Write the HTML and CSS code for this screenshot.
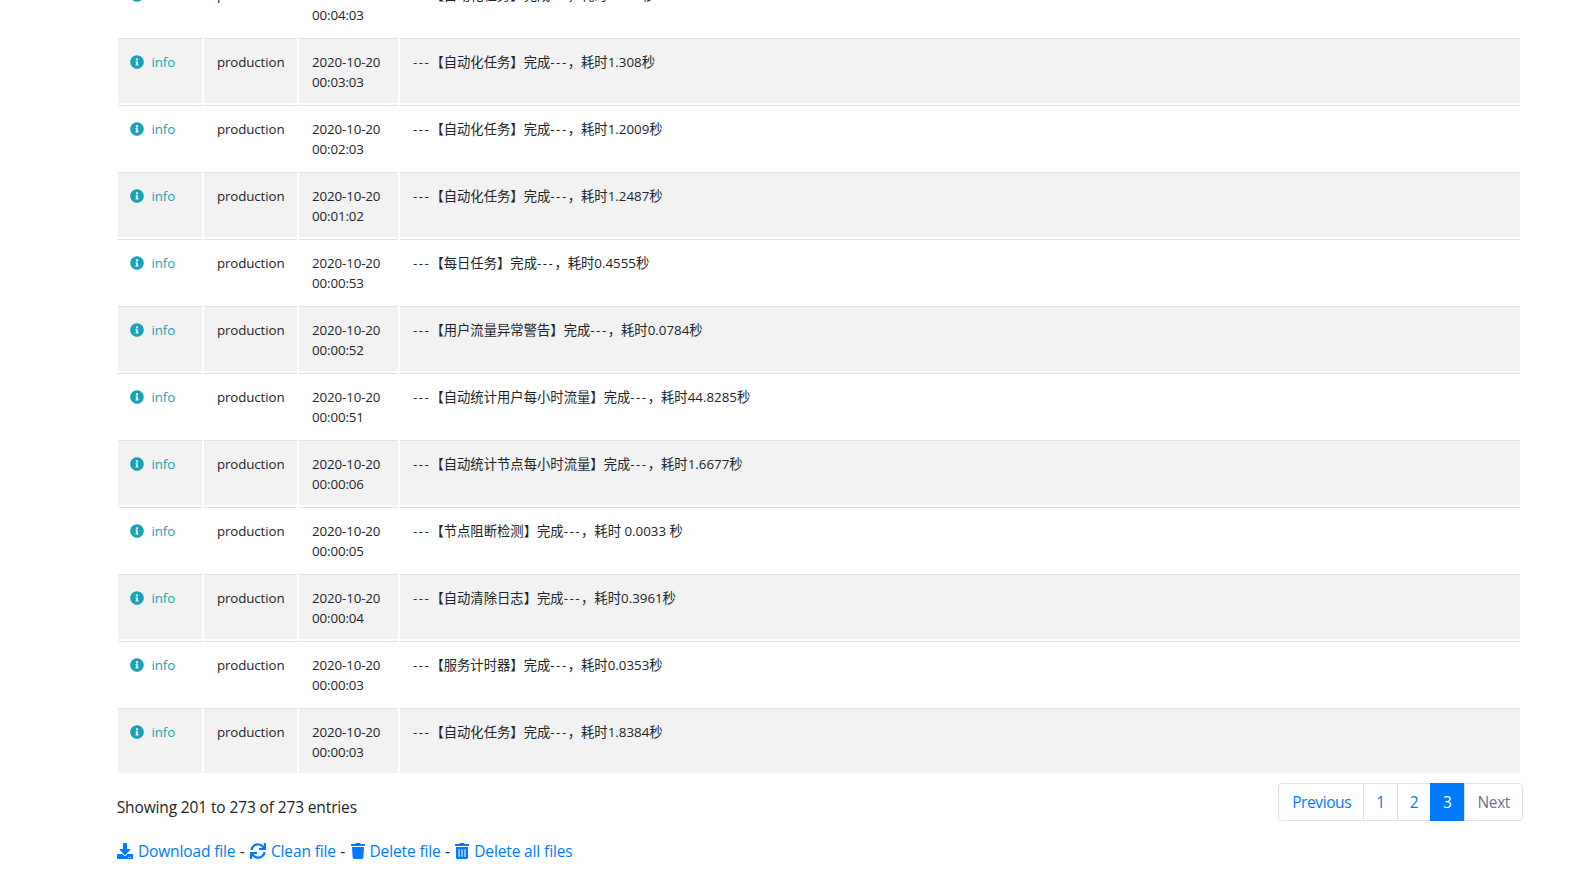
FILE: index.html
```html
<!DOCTYPE html>
<html lang="en">
<head>
<meta charset="utf-8">
<title>Log viewer</title>
<link rel="stylesheet" href="styles.css">
</head>
<body>
<svg class="defs" aria-hidden="true"><defs>
<symbol id="i-info" viewBox="0 0 512 512"><path d="M256 8C119.043 8 8 119.083 8 256c0 136.997 111.043 248 248 248s248-111.003 248-248C504 119.083 392.957 8 256 8zm0 110c23.196 0 42 18.804 42 42s-18.804 42-42 42-42-18.804-42-42 18.804-42 42-42zm56 254c0 6.627-5.373 12-12 12h-88c-6.627 0-12-5.373-12-12v-24c0-6.627 5.373-12 12-12h12v-64h-12c-6.627 0-12-5.373-12-12v-24c0-6.627 5.373-12 12-12h64c6.627 0 12 5.373 12 12v100h12c6.627 0 12 5.373 12 12v24z"/></symbol>
</defs></svg>
<main class="content">
<table class="logs">
<colgroup><col class="c-level"><col class="c-ctx"><col class="c-date"><col></colgroup>
<tbody>
<tr><td class="lvl"><span class="level"><svg class="ico-info"><use href="#i-info"/></svg>info</span></td><td>production</td><td>2020-10-20<br>00:04:03</td><td class="msg"><span class="dash">---</span>【自动化任务】完成<span class="dash">---</span>，耗时1.536秒</td></tr>
<tr><td class="lvl"><span class="level"><svg class="ico-info"><use href="#i-info"/></svg>info</span></td><td>production</td><td>2020-10-20<br>00:03:03</td><td class="msg"><span class="dash">---</span>【自动化任务】完成<span class="dash">---</span>，耗时1.308秒</td></tr>
<tr><td class="lvl"><span class="level"><svg class="ico-info"><use href="#i-info"/></svg>info</span></td><td>production</td><td>2020-10-20<br>00:02:03</td><td class="msg"><span class="dash">---</span>【自动化任务】完成<span class="dash">---</span>，耗时1.2009秒</td></tr>
<tr><td class="lvl"><span class="level"><svg class="ico-info"><use href="#i-info"/></svg>info</span></td><td>production</td><td>2020-10-20<br>00:01:02</td><td class="msg"><span class="dash">---</span>【自动化任务】完成<span class="dash">---</span>，耗时1.2487秒</td></tr>
<tr><td class="lvl"><span class="level"><svg class="ico-info"><use href="#i-info"/></svg>info</span></td><td>production</td><td>2020-10-20<br>00:00:53</td><td class="msg"><span class="dash">---</span>【每日任务】完成<span class="dash">---</span>，耗时0.4555秒</td></tr>
<tr><td class="lvl"><span class="level"><svg class="ico-info"><use href="#i-info"/></svg>info</span></td><td>production</td><td>2020-10-20<br>00:00:52</td><td class="msg"><span class="dash">---</span>【用户流量异常警告】完成<span class="dash">---</span>，耗时0.0784秒</td></tr>
<tr><td class="lvl"><span class="level"><svg class="ico-info"><use href="#i-info"/></svg>info</span></td><td>production</td><td>2020-10-20<br>00:00:51</td><td class="msg"><span class="dash">---</span>【自动统计用户每小时流量】完成<span class="dash">---</span>，耗时44.8285秒</td></tr>
<tr><td class="lvl"><span class="level"><svg class="ico-info"><use href="#i-info"/></svg>info</span></td><td>production</td><td>2020-10-20<br>00:00:06</td><td class="msg"><span class="dash">---</span>【自动统计节点每小时流量】完成<span class="dash">---</span>，耗时1.6677秒</td></tr>
<tr><td class="lvl"><span class="level"><svg class="ico-info"><use href="#i-info"/></svg>info</span></td><td>production</td><td>2020-10-20<br>00:00:05</td><td class="msg"><span class="dash">---</span>【节点阻断检测】完成<span class="dash">---</span>，耗时 0.0033 秒</td></tr>
<tr><td class="lvl"><span class="level"><svg class="ico-info"><use href="#i-info"/></svg>info</span></td><td>production</td><td>2020-10-20<br>00:00:04</td><td class="msg"><span class="dash">---</span>【自动清除日志】完成<span class="dash">---</span>，耗时0.3961秒</td></tr>
<tr><td class="lvl"><span class="level"><svg class="ico-info"><use href="#i-info"/></svg>info</span></td><td>production</td><td>2020-10-20<br>00:00:03</td><td class="msg"><span class="dash">---</span>【服务计时器】完成<span class="dash">---</span>，耗时0.0353秒</td></tr>
<tr><td class="lvl"><span class="level"><svg class="ico-info"><use href="#i-info"/></svg>info</span></td><td>production</td><td>2020-10-20<br>00:00:03</td><td class="msg"><span class="dash">---</span>【自动化任务】完成<span class="dash">---</span>，耗时1.8384秒</td></tr>
</tbody>
</table>
<div class="table-foot">
<div class="entries">Showing 201 to 273 of 273 entries</div>
<ul class="pagination">
<li><a href="#">Previous</a></li>
<li><a href="#">1</a></li>
<li><a href="#">2</a></li>
<li class="active"><a href="#">3</a></li>
<li class="disabled"><a href="#">Next</a></li>
</ul>
</div>
<p class="actions">
<a href="#"><svg class="ico ico-w" viewBox="0 0 512 512"><path d="M216 0h80c13.3 0 24 10.7 24 24v168h87.7c17.8 0 26.7 21.5 14.1 34.1L269.7 378.3c-7.5 7.5-19.8 7.5-27.3 0L90.1 226.1c-12.6-12.6-3.7-34.1 14.1-34.1H192V24c0-13.3 10.7-24 24-24zm296 376v112c0 13.3-10.7 24-24 24H24c-13.3 0-24-10.7-24-24V376c0-13.3 10.7-24 24-24h146.7l49 49c20.1 20.1 52.5 20.1 72.6 0l49-49H488c13.3 0 24 10.7 24 24zm-124 88c0-11-9-20-20-20s-20 9-20 20 9 20 20 20 20-9 20-20zm64 0c0-11-9-20-20-20s-20 9-20 20 9 20 20 20 20-9 20-20z"/></svg> Download file</a><span class="sep"> - </span><a href="#"><svg class="ico ico-w" viewBox="0 0 512 512"><path d="M440.65 12.57l4 82.77A247.16 247.16 0 0 0 255.83 8C134.73 8 33.91 94.92 12.29 209.82A12 12 0 0 0 24.09 224h49.05a12 12 0 0 0 11.67-9.26 175.91 175.91 0 0 1 317-56.94l-101.46-4.86a12 12 0 0 0-12.57 12v47.41a12 12 0 0 0 12 12H500a12 12 0 0 0 12-12V12a12 12 0 0 0-12-12h-47.37a12 12 0 0 0-11.98 12.57zM255.83 432a175.61 175.61 0 0 1-146-77.8l101.8 4.87a12 12 0 0 0 12.57-12v-47.4a12 12 0 0 0-12-12H12a12 12 0 0 0-12 12V500a12 12 0 0 0 12 12h47.35a12 12 0 0 0 12-12.6l-4.15-82.57A247.17 247.17 0 0 0 255.83 504c121.11 0 221.93-86.92 243.55-201.82a12 12 0 0 0-11.8-14.18h-49.05a12 12 0 0 0-11.67 9.26A175.86 175.86 0 0 1 255.83 432z"/></svg> Clean file</a><span class="sep"> - </span><a href="#"><svg class="ico ico-n" viewBox="0 0 448 512"><path d="M432 32H312l-9.4-18.7A24 24 0 0 0 281.1 0H166.8a23.72 23.72 0 0 0-21.4 13.3L136 32H16A16 16 0 0 0 0 48v32a16 16 0 0 0 16 16h416a16 16 0 0 0 16-16V48a16 16 0 0 0-16-16zM53.2 467a48 48 0 0 0 47.9 45h245.8a48 48 0 0 0 47.9-45L416 128H32z"/></svg> Delete file</a><span class="sep"> - </span><a href="#"><svg class="ico ico-n" viewBox="0 0 448 512"><path d="M32 464a48 48 0 0 0 48 48h288a48 48 0 0 0 48-48V128H32zm272-256a16 16 0 0 1 32 0v224a16 16 0 0 1-32 0zm-96 0a16 16 0 0 1 32 0v224a16 16 0 0 1-32 0zm-96 0a16 16 0 0 1 32 0v224a16 16 0 0 1-32 0zM432 32H312l-9.4-18.7A24 24 0 0 0 281.1 0H166.8a23.72 23.72 0 0 0-21.4 13.3L136 32H16A16 16 0 0 0 0 48v32a16 16 0 0 0 16 16h416a16 16 0 0 0 16-16V48a16 16 0 0 0-16-16z"/></svg> Delete all files</a>
</p>
</main>
</body>
</html>
```
FILE: styles.css
```css
* { box-sizing: border-box; }
html, body { margin: 0; height: 874px; overflow: hidden; background: #fff; }
body {
  font-family: "Open Sans", "Noto Sans CJK SC", sans-serif;
  font-size: 15.5px;
  letter-spacing: -0.13px;
  line-height: 24px;
  color: #212529;
}
a { color: #007bff; text-decoration: none; }
.defs { display: none; }
.content { padding: 0 52px 0 116px; }
.logs {
  width: 1406px;
  margin-top: -31px;
  border-collapse: separate;
  border-spacing: 2px;
  table-layout: fixed;
  font-size: 13.33px;
  line-height: 20px;
  letter-spacing: -0.12px;
}
.c-level { width: 84px; }
.c-ctx { width: 93px; }
.c-date { width: 99px; }
.logs td {
  padding: 13px 11px 11px 13px;
  border-top: 1px solid #dee2e6;
  vertical-align: top;
}
.logs .lvl { padding-left: 12px; }
.logs tr:nth-child(even) td { background: #f2f2f2; }
.logs .msg { letter-spacing: 0; }
.dash { letter-spacing: 1.5px; }
.level { display: flex; align-items: center; color: #17a2b8; height: 20px; }
.ico-info { width: 14px; height: 14px; margin-right: 7.5px; fill: #17a2b8; flex: none; }
.table-foot { display: flex; justify-content: space-between; margin-top: 8px; }
.entries { padding: 12px 0 0 0.7px; }
.pagination { display: flex; list-style: none; margin: 0; padding: 0; letter-spacing: -0.4px; }
.pagination a {
  display: block;
  padding: 6px 12px;
  margin-left: -1px;
  border: 1px solid #dee2e6;
  background: #fff;
  height: 38px;
}
.pagination li:first-child a { margin-left: 0; padding: 6px 12px 6px 13px; border-radius: 4px 0 0 4px; }
.pagination li:last-child a { padding: 6px 12px 6px 13px; border-radius: 0 4px 4px 0; }
.pagination .active a { background: #007bff; border-color: #007bff; color: #fff; }
.pagination .disabled a { color: #6c757d; }
.actions { margin: 18px 0 0; }
.sep { padding: 0 0.5px; }
.ico { height: 16px; fill: #007bff; vertical-align: -2px; margin: 0 1px; }
.ico-w { width: 16px; }
.ico-n { width: 14px; }
```
